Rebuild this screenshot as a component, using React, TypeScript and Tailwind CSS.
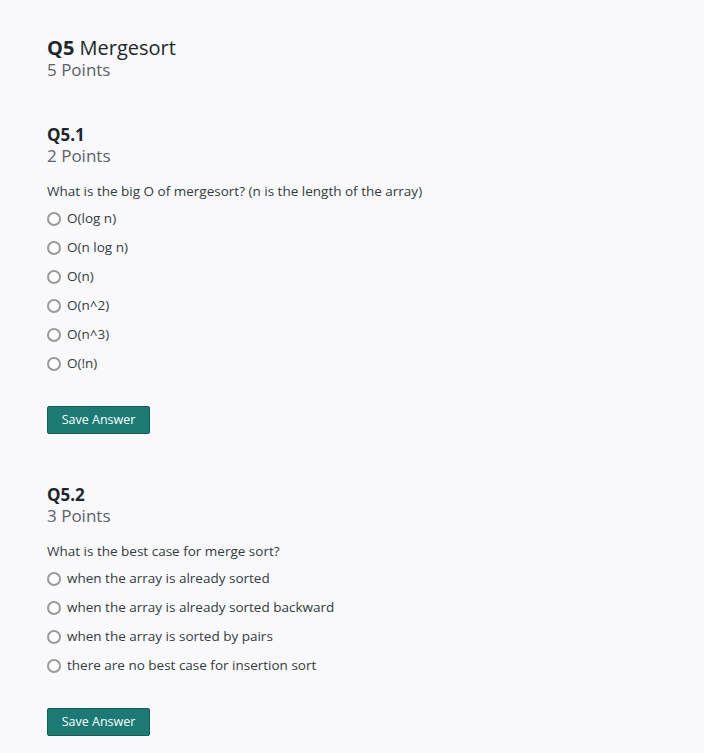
const font = { fontFamily: "'Open Sans', 'Noto Sans', sans-serif" };

type Part = {
  id: string;
  points: number;
  prompt: string;
  options: string[];
};

const parts: Part[] = [
  {
    id: "Q5.1",
    points: 2,
    prompt: "What is the big O of mergesort? (n is the length of the array)",
    options: ["O(log n)", "O(n log n)", "O(n)", "O(n^2)", "O(n^3)", "O(!n)"],
  },
  {
    id: "Q5.2",
    points: 3,
    prompt: "What is the best case for merge sort?",
    options: [
      "when the array is already sorted",
      "when the array is already sorted backward",
      "when the array is sorted by pairs",
      "there are no best case for insertion sort",
    ],
  },
];

function Option({ name, label }: { name: string; label: string }) {
  return (
    <label className="flex h-[29px] cursor-pointer items-center gap-[6px]">
      <input
        type="radio"
        name={name}
        className="m-0 h-[14px] w-[14px] cursor-pointer appearance-none rounded-full border-2 border-[#9a9a9a] bg-white"
      />
      <span className="text-[13.5px] text-[#333b40]">{label}</span>
    </label>
  );
}

function QuestionPart({ part }: { part: Part }) {
  return (
    <section className="mt-[46px] [&+&]:mt-[51px]">
      <h3 className="text-[17px] font-bold leading-[20px] text-[#20272b]">{part.id}</h3>
      <p className="text-[17px] leading-[22px] text-[#5b6268]">{part.points} Points</p>
      <p className="mt-[15px] text-[13.5px] leading-[18px] text-[#333b40]">{part.prompt}</p>
      <div className="mt-[4px] flex flex-col">
        {part.options.map((o) => (
          <Option key={o} name={part.id} label={o} />
        ))}
      </div>
      <button className="mt-[28px] h-[28px] w-[103px] rounded-[2px] border border-[#135e59] bg-[#1b7b74] text-[12.5px] text-white">
        Save Answer
      </button>
    </section>
  );
}

export default function App() {
  return (
    <div className="min-h-screen bg-[#f9f9fb] px-[47px] pt-[35px] pb-[20px]" style={font}>
      <h2 className="text-[20px] leading-[26px] text-[#20272b]">
        <span className="font-bold">Q5</span> Mergesort
      </h2>
      <p className="text-[17px] leading-[18px] text-[#5b6268]">5 Points</p>
      {parts.map((p) => (
        <QuestionPart key={p.id} part={p} />
      ))}
    </div>
  );
}
